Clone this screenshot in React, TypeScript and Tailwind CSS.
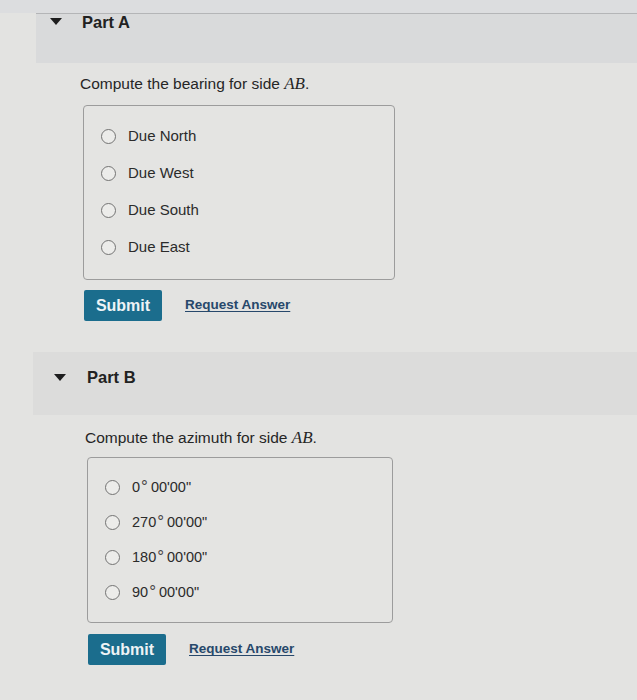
import React from "react";

const MathAB = () => (
  <span className="font-['Liberation_Serif',serif] italic text-[17px]">AB</span>
);

function Radio({ label }: { label: React.ReactNode }) {
  return (
    <div className="flex items-center h-full">
      <span className="w-[15px] h-[15px] rounded-full border border-[#737373] bg-[#ececea] shrink-0" />
      <span className="ml-[12px] text-[15px] text-[#2b2b2b]">{label}</span>
    </div>
  );
}

function Caret() {
  return (
    <svg width="12" height="8" viewBox="0 0 12 8" className="shrink-0">
      <path d="M0 0 L12 0 L6 7 Z" fill="#1e1e1e" />
    </svg>
  );
}

function Actions() {
  return (
    <div className="flex items-center">
      <button className="h-[31px] w-[78px] rounded-[2px] bg-[#1b6d8d] text-[#eef3f6] text-[16px] font-bold">
        Submit
      </button>
      <a className="ml-[23px] text-[13.5px] font-bold text-[#27486b] underline underline-offset-2 decoration-1">
        Request Answer
      </a>
    </div>
  );
}

const deg = (d: string) => (
  <span>
    {d}
    <span className="text-[17px] leading-none ml-[1px] mr-[3px] text-[#444]">°</span>
    00'00"
  </span>
);

export default function App() {
  const optionsA = ["Due North", "Due West", "Due South", "Due East"];
  const optionsB = [deg("0"), deg("270"), deg("180"), deg("90")];

  return (
    <div className="w-[637px] h-[700px] overflow-hidden bg-[#e3e3e1] font-['Liberation_Sans',Arial,sans-serif] text-[#222]">
      {/* top strip */}
      <div className="h-[13px] bg-[#dcdddf]" />

      {/* Part A header */}
      <div className="ml-[36px] h-[50px] bg-[#d9dadb] border-t border-[#b4b5b7] flex items-start">
        <div className="pl-[14px] pt-[4px]">
          <Caret />
        </div>
        <div className="ml-[20px] text-[16.5px] font-bold leading-[14px] pt-[1px]">Part A</div>
      </div>

      {/* Part A body */}
      <div className="pl-[80px] pt-[12px]">
        <div className="text-[15.5px] text-[#262626] h-[18px] leading-[18px]">
          Compute the bearing for side <MathAB />.
        </div>
        <div className="mt-[12px] ml-[3px] w-[312px] h-[175px] rounded-[4px] border border-[#9c9c9c] bg-[#e4e4e2] pl-[17px] pt-[12px]">
          {optionsA.map((o) => (
            <div key={o} className="h-[37px]">
              <Radio label={o} />
            </div>
          ))}
        </div>
        <div className="mt-[10px] ml-[4px]">
          <Actions />
        </div>
      </div>

      {/* Part B header */}
      <div className="mt-[31px] ml-[33px] h-[63px] bg-[#dcdcdb] flex items-center pb-[12px]">
        <div className="pl-[21px]">
          <Caret />
        </div>
        <div className="ml-[21px] text-[16.5px] font-bold">Part B</div>
      </div>

      {/* Part B body */}
      <div className="pl-[85px] pt-[14px]">
        <div className="text-[15.5px] text-[#262626] h-[18px] leading-[18px]">
          Compute the azimuth for side <MathAB />.
        </div>
        <div className="mt-[10px] ml-[2px] w-[306px] h-[166px] rounded-[4px] border border-[#9c9c9c] bg-[#e4e4e2] pl-[17px] pt-[12px]">
          {optionsB.map((o, i) => (
            <div key={i} className="h-[35px]">
              <Radio label={<span className="text-[14.5px]">{o}</span>} />
            </div>
          ))}
        </div>
        <div className="mt-[11px] ml-[3px]">
          <Actions />
        </div>
      </div>
    </div>
  );
}
